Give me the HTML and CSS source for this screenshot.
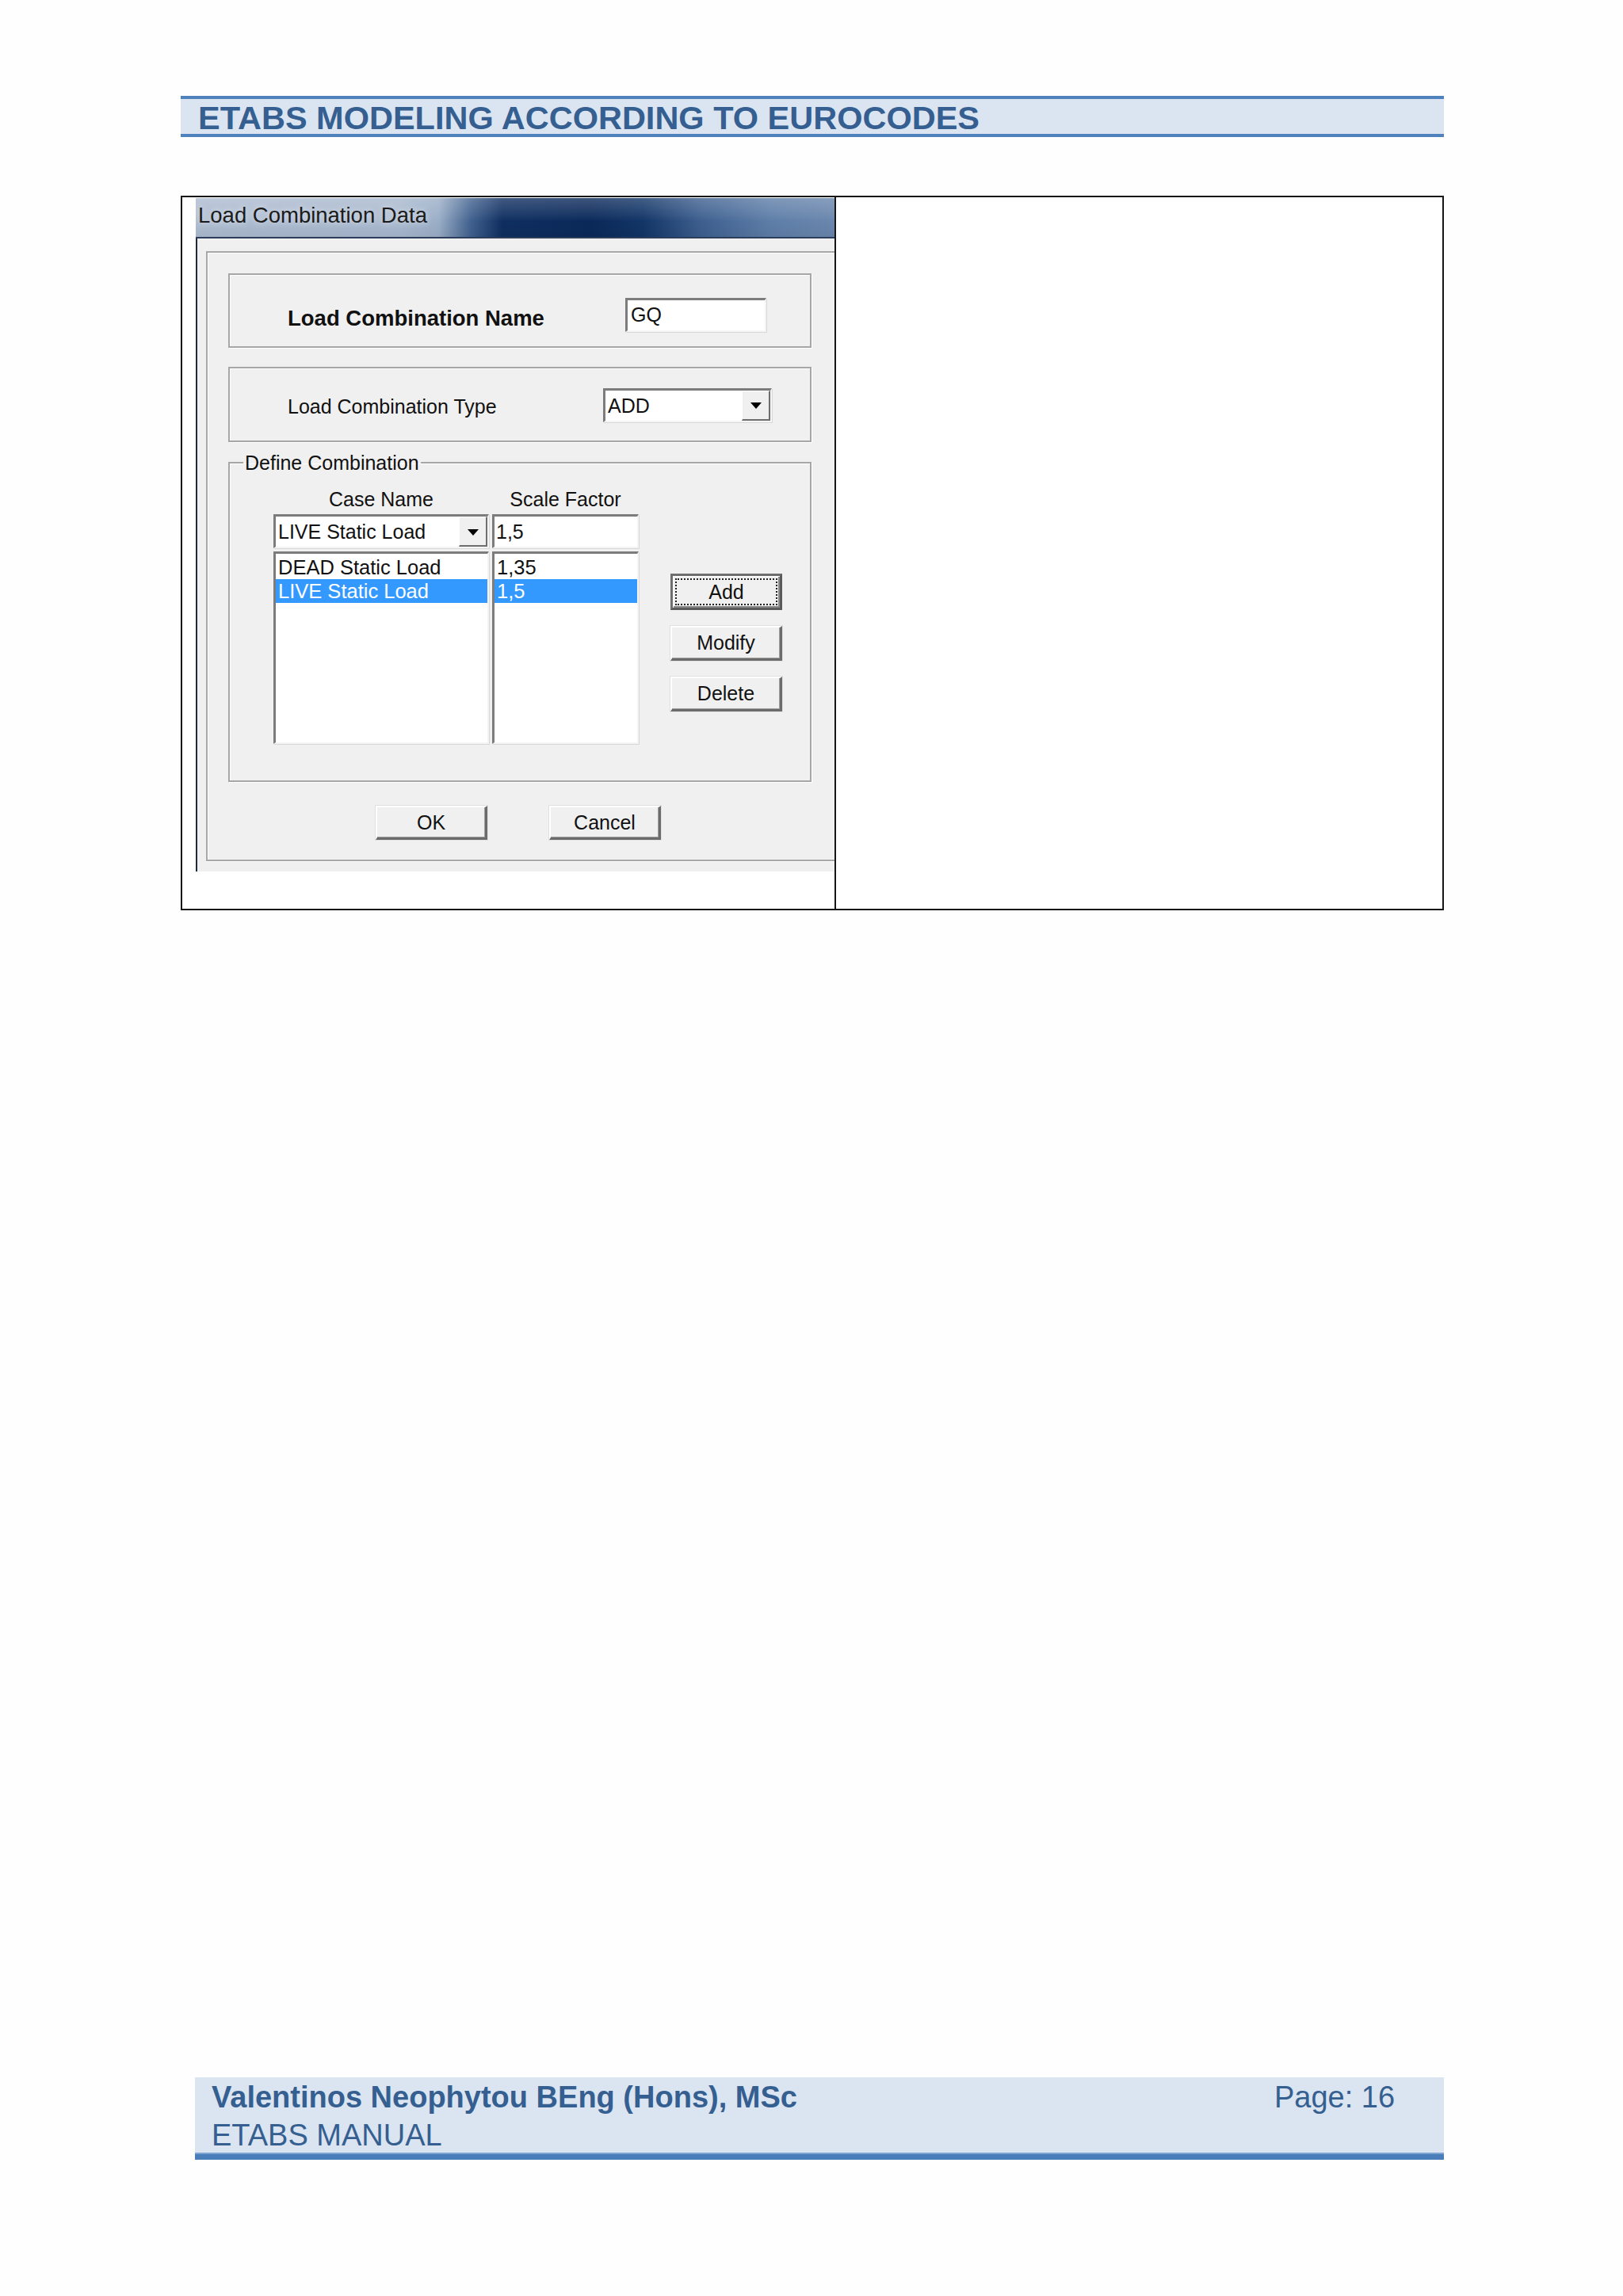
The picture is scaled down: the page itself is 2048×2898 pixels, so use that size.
FILE: index.html
```html
<!DOCTYPE html>
<html>
<head>
<meta charset="utf-8">
<title>ETABS Manual - Page 16</title>
<link rel="stylesheet" href="styles.css">
</head>
<body>
<div class="page">
  <div class="doc-header">
    <span class="doc-title">ETABS MODELING ACCORDING TO EUROCODES</span>
  </div>

  <div class="figure">
    <div class="fig-left">
      <div class="dialog">
        <div class="titlebar"><span class="title-text">Load Combination Data</span></div>
        <div class="dlg-body">
          <div class="outer-frame">
            <div class="box box-name">
              <span class="lbl lbl-bold">Load Combination Name</span>
              <div class="field field-name">GQ</div>
            </div>
            <div class="box box-type">
              <span class="lbl lbl-type">Load Combination Type</span>
              <div class="field combo combo-type">
                <span class="combo-text">ADD</span>
                <span class="combo-btn"><span class="arrow"></span></span>
              </div>
            </div>
            <fieldset class="group">
              <legend class="legend">Define Combination</legend>
              <div class="grid">
                <div class="colhead h1">Case Name</div>
                <div class="colhead h2">Scale Factor</div>
                <div class="spacer"></div>
                <div class="field combo combo-case">
                  <span class="combo-text">LIVE Static Load</span>
                  <span class="combo-btn"><span class="arrow"></span></span>
                </div>
                <div class="field field-scale">1,5</div>
                <div class="spacer"></div>
                <div class="field list list-case">
                  <div class="item">DEAD Static Load</div>
                  <div class="item sel">LIVE Static Load</div>
                </div>
                <div class="field list list-scale">
                  <div class="item">1,35</div>
                  <div class="item sel">1,5</div>
                </div>
                <div class="btn-col">
                  <div class="btn btn-default"><span class="focus">Add</span></div>
                  <div class="btn">Modify</div>
                  <div class="btn">Delete</div>
                </div>
              </div>
            </fieldset>
            <div class="ok-row">
              <div class="btn btn-ok">OK</div>
              <div class="btn btn-cancel">Cancel</div>
            </div>
          </div>
        </div>
      </div>
    </div>
    <div class="fig-right"></div>
  </div>

  <div class="doc-footer">
    <div class="foot-line1">
      <span class="author">Valentinos Neophytou BEng (Hons), MSc</span>
      <span class="pageno">Page: 16</span>
    </div>
    <div class="foot-line2">ETABS MANUAL</div>
  </div>
</div>
</body>
</html>
```

FILE: styles.css
```css
html, body {
  margin: 0;
  padding: 0;
  background: #fefefe;
}

.page {
  width: 2048px;
  height: 2898px;
  position: relative;
  overflow: hidden;
  font-family: "Liberation Sans", Arial, sans-serif;
}

/* ---------- document header ---------- */
.doc-header {
  margin: 121px 0 0 228px;
  width: 1572px;
  height: 44px;
  background: #dbe5f1;
  border-top: 4px solid #4f81bd;
  border-bottom: 4px solid #4f81bd;
  display: flex;
  align-items: center;
  padding-left: 22px;
}

.doc-title {
  font-family: "Liberation Sans", Arial, sans-serif;
  font-weight: bold;
  font-size: 41.5px;
  color: #365f91;
  line-height: 44px;
  margin-top: 4px;
}

/* ---------- figure frame ---------- */
.figure {
  margin: 74px 0 0 228px;
  width: 1594px;
  height: 902px;
  box-sizing: border-box;
  border: 2px solid #161616;
  display: flex;
  background: #ffffff;
}

.fig-left {
  width: 825px;
  box-sizing: border-box;
  border-right: 2px solid #161616;
  padding: 1px 0 0 17px;
  overflow: hidden;
}

.fig-right {
  flex: 1;
}

.dialog {
  width: 806px;
  overflow: hidden;
  font-family: "Liberation Sans", Arial, sans-serif;
  color: #111;
}

.titlebar {
  height: 51px;
  display: flex;
  align-items: center;
  padding-left: 3px;
  background:
    linear-gradient(180deg, rgba(255,255,255,0.20) 0%, rgba(255,255,255,0.06) 45%, rgba(0,0,0,0) 60%, rgba(0,0,0,0.05) 100%),
    linear-gradient(90deg, #adbcd0 0%, #a8b8ce 32%, #9aaec7 38%, #42628f 43%, #0f2f61 48%, #0a295a 62%, #123567 70%, #3d5f8f 79%, #5e7ea8 90%, #6a86ad 100%);
  border-bottom: 2px solid #2c3e5c;
  box-sizing: border-box;
}

.title-text {
  font-size: 27.5px;
  color: #1b1b1b;
  text-shadow: 0 0 8px rgba(255,255,255,0.7);
  margin-top: -5px;
}

.dlg-body {
  height: 799px;
  background: #f0f0f0;
  border-left: 2px solid #1e2a42;
  box-sizing: border-box;
  padding: 16px 0 0 11px;
}

.outer-frame {
  width: 860px;
  height: 770px;
  box-sizing: border-box;
  border-top: 2px solid #a8a8a8;
  border-left: 2px solid #a8a8a8;
  border-bottom: 2px solid #a8a8a8;
  box-shadow: inset 1px 1px 0 #ffffff, 0 1px 0 #ffffff;
  padding: 26px 0 0 26px;
}

/* ---------- group boxes ---------- */
.box {
  width: 736px;
  box-sizing: border-box;
  border: 2px solid #a6a6a6;
  box-shadow: inset 1px 1px 0 #ffffff, 1px 1px 0 #ffffff;
  display: flex;
}

.box-name {
  height: 94px;
  align-items: flex-start;
}

.box-type {
  height: 95px;
  margin-top: 24px;
  align-items: center;
  padding-top: 1px;
}

.lbl {
  font-size: 25px;
  margin-left: 73px;
}

.lbl-bold {
  font-weight: bold;
  font-size: 27.5px;
  width: 426px;
  line-height: 32px;
  margin-top: 39px;
}

.lbl-type {
  width: 398px;
  margin-top: 4px;
}

/* ---------- sunken fields ---------- */
.field {
  box-sizing: border-box;
  background: #ffffff;
  border-style: solid;
  border-width: 3px 2px 2px 3px;
  border-color: #7c7c7c #f4f4f4 #f4f4f4 #7c7c7c;
  box-shadow: 1px 1px 0 #d8d8d8;
  font-size: 25px;
  line-height: 1;
  color: #111;
}

.field-name {
  width: 178px;
  height: 43px;
  padding: 6px 0 0 4px;
  margin-top: 29px;
}

.combo {
  display: flex;
  align-items: stretch;
  height: 43px;
}

.combo-text {
  flex: 1;
  padding: 7px 0 0 3px;
}

.combo-btn {
  width: 36px;
  box-sizing: border-box;
  background: #f0f0f0;
  border-style: solid;
  border-width: 1px 2px 2px 1px;
  border-color: #ffffff #6e6e6e #6e6e6e #ffffff;
  display: flex;
  align-items: center;
  justify-content: center;
}

.arrow {
  width: 0;
  height: 0;
  border-left: 7px solid transparent;
  border-right: 7px solid transparent;
  border-top: 8px solid #000;
  margin-top: 2px;
}

.combo-type {
  width: 213px;
}

/* ---------- define combination ---------- */
.group {
  margin: 12px 0 0 0;
  padding: 0;
  width: 736px;
  height: 417px;
  box-sizing: border-box;
  border: 2px solid #a6a6a6;
  box-shadow: inset 1px 1px 0 #ffffff, 1px 1px 0 #ffffff;
  min-width: 0;
}

.legend {
  font-size: 25px;
  line-height: 28px;
  padding: 0 2px;
  margin-left: 17px;
}

.grid {
  display: grid;
  grid-template-columns: 272px 185px 141px;
  column-gap: 4px;
  grid-template-rows: 30px 43px 243px;
  row-gap: 4px;
  margin: 17px 0 0 55px;
}

.grid > .btn-col,
.grid > .spacer {
  margin-left: 36px;
}

.colhead {
  font-size: 25px;
  text-align: center;
  line-height: 30px;
}

.field-scale {
  height: 43px;
  padding: 7px 0 0 2px;
}

.list {
  height: 243px;
  padding-top: 2px;
}

.list .item {
  height: 30px;
  line-height: 30px;
  padding-left: 3px;
  font-size: 25.5px;
}

.list .item.sel {
  background: #3399ff;
  color: #ffffff;
}

.btn-col {
  display: flex;
  flex-direction: column;
  padding-top: 28px;
}

/* ---------- buttons ---------- */
.btn {
  width: 141px;
  height: 44px;
  box-sizing: border-box;
  background: #f0f0f0;
  border-style: solid;
  border-width: 2px 3px 3px 2px;
  border-color: #ffffff #6b6b6b #6b6b6b #ffffff;
  box-shadow: inset -1px -1px 0 #a0a0a0, 0 0 0 1px #e0e0e0;
  display: flex;
  align-items: center;
  justify-content: center;
  font-size: 25px;
  color: #111;
  margin-bottom: 20px;
}

.btn-default {
  border: 3px solid #5a5a5a;
  border-top-color: #6e6e6e;
  border-left-color: #6e6e6e;
  box-shadow: inset 1px 1px 0 #ffffff, inset -2px -2px 0 #8a8a8a;
  height: 46px;
  padding: 3px;
}

.focus {
  width: 100%;
  height: 100%;
  box-sizing: border-box;
  border: 2px dotted #222;
  display: flex;
  align-items: center;
  justify-content: center;
}

.ok-row {
  display: flex;
  margin: 30px 0 0 186px;
  gap: 78px;
}

.btn-ok, .btn-cancel {
  height: 43px;
  margin-bottom: 0;
}

/* ---------- document footer ---------- */
.doc-footer {
  margin: 1473px 0 0 246px;
  width: 1576px;
  height: 104px;
  box-sizing: border-box;
  background: #dbe5f1;
  border-bottom: 7px solid #4a7ebb;
  box-shadow: inset 0 -2px 0 #7fa3d0;
  padding: 2px 0 0 21px;
  color: #365f91;
  font-family: "Liberation Sans", Arial, sans-serif;
  font-size: 38px;
}

.foot-line1 {
  display: flex;
  line-height: 46px;
}

.author {
  font-weight: bold;
  width: 1341px;
}

.foot-line2 {
  line-height: 50px;
}
```
